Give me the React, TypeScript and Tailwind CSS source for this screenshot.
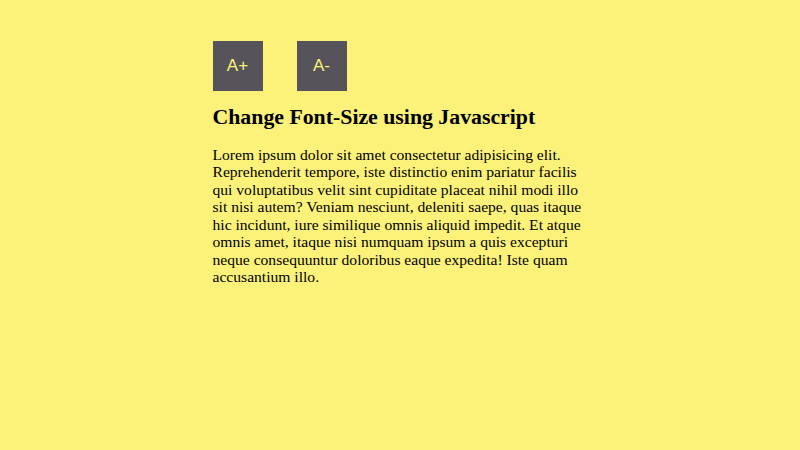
const App = () => {
  return (
    <div className="min-h-screen bg-[#fcf279] font-['Liberation_Serif',serif] text-black">
      <div className="mx-auto w-[375px] pt-[41px]">
        <div className="flex gap-[34px]">
          <button className="h-[50px] w-[50px] bg-[#57535a] font-['Liberation_Sans',sans-serif] text-[17px] text-[#fcf279]">
            A+
          </button>
          <button className="h-[50px] w-[50px] bg-[#57535a] font-['Liberation_Sans',sans-serif] text-[17px] text-[#fcf279]">
            A-
          </button>
        </div>
        <h1 className="mt-[14px] text-[21.8px] font-bold leading-[normal]">
          Change Font-Size using Javascript
        </h1>
        <p className="mt-[16px] text-[15.6px] leading-[17.45px]">
          Lorem ipsum dolor sit amet consectetur adipisicing elit. Reprehenderit
          tempore, iste distinctio enim pariatur facilis qui voluptatibus velit
          sint cupiditate placeat nihil modi illo sit nisi autem? Veniam
          nesciunt, deleniti saepe, quas itaque hic incidunt, iure similique
          omnis aliquid impedit. Et atque omnis amet, itaque nisi numquam ipsum a
          quis excepturi neque consequuntur doloribus eaque expedita! Iste quam
          accusantium illo.
        </p>
      </div>
    </div>
  );
};

export default App;
